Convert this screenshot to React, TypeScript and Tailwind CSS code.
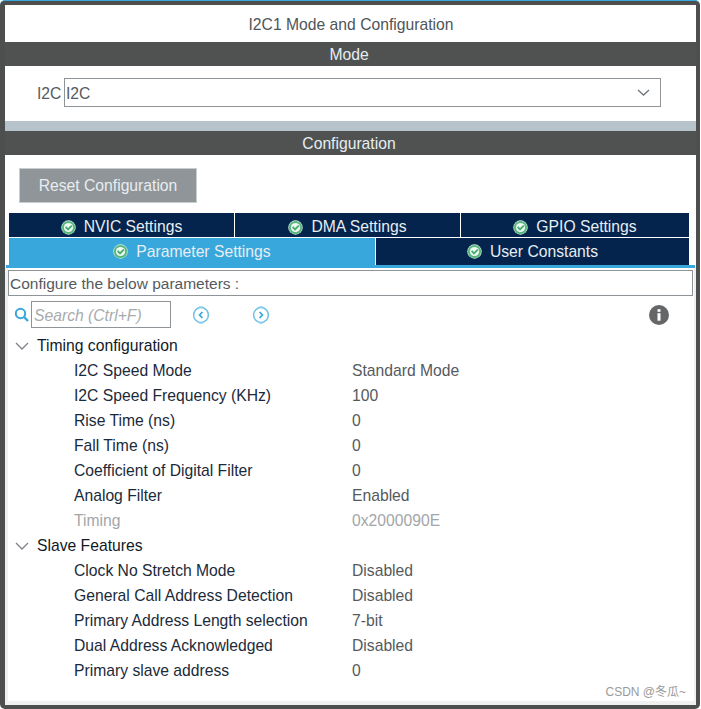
import React from "react";

const font = { fontFamily: '"Liberation Sans", Arial, "Noto Sans CJK SC", sans-serif' };

function Check({ className = "" }: { className?: string }) {
  return (
    <svg width="15" height="15" viewBox="0 0 15 15" className={className}>
      <circle cx="7.5" cy="7.5" r="7.2" fill="#d9efe2" />
      <circle cx="7.5" cy="7.5" r="6.6" fill="#3fae6d" opacity="0.85" />
      <circle cx="7.5" cy="7.5" r="4.6" fill="#f1f8f3" />
      <path d="M4.6 6.8 L7 9.4 L10.8 5.6" fill="none" stroke="#3fae6d" strokeWidth="1.8" />
    </svg>
  );
}

function Tab({ label, active, className = "" }: { label: string; active?: boolean; className?: string }) {
  return (
    <div
      className={`flex items-center justify-center gap-[8px] text-[15.7px] text-[#e8edf2] ${
        active ? "bg-[#38a8dc]" : "bg-[#04244d]"
      } ${className}`}
    >
      <Check />
      <span>{label}</span>
    </div>
  );
}

function Row({ name, value, muted }: { name: string; value: string; muted?: boolean }) {
  return (
    <div className={`flex h-[25px] items-center pl-[66px] text-[15.7px] ${muted ? "text-[#a3a6a9]" : ""}`}>
      <span className={`w-[278px] ${muted ? "" : "text-[#1b2a3a]"}`}>{name}</span>
      <span className={muted ? "" : "text-[#555a5e]"}>{value}</span>
    </div>
  );
}

function Group({ title }: { title: string }) {
  return (
    <div className="flex h-[25px] items-center text-[15.7px] text-[#101a26]">
      <svg width="14" height="8" viewBox="0 0 14 8" className="ml-[7px] mr-[8px]">
        <path d="M1 1 L7 7 L13 1" fill="none" stroke="#7d8388" strokeWidth="1.3" />
      </svg>
      <span>{title}</span>
    </div>
  );
}

function Nav({ dir, className = "" }: { dir: "prev" | "next"; className?: string }) {
  return (
    <svg width="18" height="18" viewBox="0 0 18 18" className={className}>
      <circle cx="9" cy="9" r="7.4" fill="none" stroke="#6cc0e6" strokeWidth="1.5" />
      <path d="M7 0.8 H11 M7 17.2 H11" stroke="#a9daf0" strokeWidth="1.4" />
      <path
        d={dir === "prev" ? "M10.4 6 L7.6 9 L10.4 12" : "M7.6 6 L10.4 9 L7.6 12"}
        fill="none"
        stroke="#38a8dc"
        strokeWidth="1.8"
      />
    </svg>
  );
}

export default function App() {
  return (
    <div style={font} className="h-[709px] w-[701px] bg-white">
      <div className="h-full w-[700px] rounded-[5px] border-t border-[#38a8dc] bg-[#4d4f4e] pt-[4px] pb-[4px] pl-[5px] pr-[4px]">
        <div className="flex h-full w-full flex-col bg-white">
          <div className="flex h-[37px] shrink-0 items-center justify-center pl-[1px] pt-[3px] text-[15.7px] text-[#4f5558]">
            I2C1 Mode and Configuration
          </div>
          <div className="flex h-[24px] shrink-0 items-center justify-center bg-[#505251] pr-[3px] pt-px text-[15.7px] text-[#e6eef2]">
            Mode
          </div>

          <div className="flex h-[55px] shrink-0 items-start pt-[12px]">
            <span className="ml-[32px] mt-[4px] w-[27px] text-[15.7px] text-[#555a5e]">I2C</span>
            <div className="flex h-[29px] w-[597px] items-center justify-between border border-[#8e9497] pl-[1px] pr-[10px] pt-[3px] text-[15.7px] text-[#555a5e]">
              <span>I2C</span>
              <svg width="13" height="7" viewBox="0 0 13 7" className="-mt-[3px]">
                <path d="M1 1 L6.5 6 L12 1" fill="none" stroke="#6f757a" strokeWidth="1.3" />
              </svg>
            </div>
          </div>

          <div className="h-[10px] shrink-0 bg-[#b7c3ca]" />
          <div className="flex h-[24px] shrink-0 items-center justify-center bg-[#505251] pr-[3px] pt-px text-[15.7px] text-[#e6eef2]">
            Configuration
          </div>

          <div className="pl-[14px] pt-[13px]">
            <button className="h-[35px] w-[178px] border border-[#c8cdd0] bg-[#8f9599] text-[15.7px] text-[#e8edf0]">
              Reset Configuration
            </button>
          </div>

          <div className="ml-[4px] mt-[10px] w-[680px]">
            <div className="flex h-[24px] gap-px">
              <Tab label="NVIC Settings" className="w-[225px] pt-[4px]" />
              <Tab label="DMA Settings" className="w-[225px] pt-[4px]" />
              <Tab label="GPIO Settings" className="flex-1 pt-[4px]" />
            </div>
            <div className="mt-px flex h-[27px] gap-px">
              <Tab label="Parameter Settings" active className="w-[366px]" />
              <Tab label="User Constants" className="flex-1" />
            </div>
          </div>

          <div className="flex min-h-0 flex-1 flex-col bg-[#f0f0f0] pb-[4px] pl-[3px] pr-[2px]">
            <div className="-ml-[2px] -mr-px h-[3px] shrink-0 bg-[#38a8dc]" />
            <div className="relative flex-1 bg-white">
              <div className="mt-[2px] flex h-[26px] w-[685px] items-center border border-[#8e9497] pl-px pt-px text-[15.5px] text-[#555a5e]">
                Configure the below parameters :
              </div>

              <div className="mt-[5px] flex h-[27px] items-center">
                <svg width="16" height="16" viewBox="0 0 16 16" className="ml-[6px] mr-[1px]">
                  <circle cx="6.5" cy="6.5" r="4.7" fill="none" stroke="#38a8dc" strokeWidth="2" />
                  <path d="M10 10 L14 14" stroke="#38a8dc" strokeWidth="2.4" />
                </svg>
                <div className="flex h-[27px] w-[140px] items-center border border-[#8e9497] pl-[2px] pt-[3px] text-[15.7px] italic text-[#a6abae]">
                  Search (Ctrl+F)
                </div>
                <Nav dir="prev" className="ml-[21px]" />
                <Nav dir="next" className="ml-[42px]" />
                <svg width="20" height="20" viewBox="0 0 20 20" className="ml-[379px]">
                  <circle cx="10" cy="10" r="10" fill="#646668" />
                  <rect x="8.5" y="8.2" width="3" height="7.5" fill="#fff" />
                  <rect x="8.5" y="4.2" width="3" height="2.6" fill="#fff" />
                </svg>
              </div>

              <div className="mt-[5px]">
                <Group title="Timing configuration" />
                <Row name="I2C Speed Mode" value="Standard Mode" />
                <Row name="I2C Speed Frequency (KHz)" value="100" />
                <Row name="Rise Time (ns)" value="0" />
                <Row name="Fall Time (ns)" value="0" />
                <Row name="Coefficient of Digital Filter" value="0" />
                <Row name="Analog Filter" value="Enabled" />
                <Row name="Timing" value="0x2000090E" muted />
                <Group title="Slave Features" />
                <Row name="Clock No Stretch Mode" value="Disabled" />
                <Row name="General Call Address Detection" value="Disabled" />
                <Row name="Primary Address Length selection" value="7-bit" />
                <Row name="Dual Address Acknowledged" value="Disabled" />
                <Row name="Primary slave address" value="0" />
              </div>

              {/* watermark sits over the panel */}
              <span className="absolute bottom-0 right-[8px] text-[12px] text-[#9a9a9a]">CSDN @冬瓜~</span>
            </div>
          </div>
        </div>
      </div>
    </div>
  );
}
